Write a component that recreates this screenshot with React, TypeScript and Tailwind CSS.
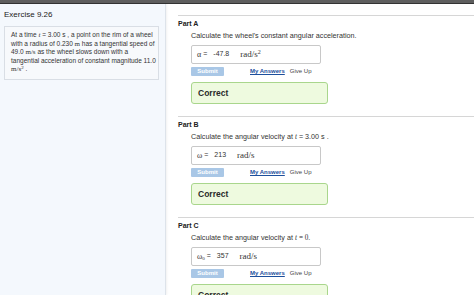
import React from "react";

const serif = "font-['Liberation_Serif',serif]";

const Part = ({
  label,
  prompt,
  symbol,
  value,
  unit,
}: {
  label: string;
  prompt: React.ReactNode;
  symbol: React.ReactNode;
  value: string;
  unit: React.ReactNode;
}) => (
  <div className="h-[101px] border-t border-[#d6d6d6] pt-[3px]">
    <div className="text-[7px] leading-[10px] font-bold text-[#222]">{label}</div>
    <div className="ml-[13px]">
      <div className="mt-[2px] text-[7.2px] leading-[10px] text-[#333]">{prompt}</div>
      <div className="mt-[4px] flex h-[19px] w-[130px] items-center rounded-[2px] border border-[#c8c8c8] bg-white pl-[5px] text-[7px] text-[#333]">
        <span className={`${serif} text-[8px]`}>{symbol}</span>
        <span className="ml-[2px]">=</span>
        <span className="ml-[6px]">{value}</span>
        <span className={`${serif} ml-[11px] text-[9px]`}>{unit}</span>
      </div>
      <div className="mt-[3px] flex h-[9px] items-center">
        <button className="h-[9px] w-[33px] rounded-[1px] bg-[#a9c7e6] text-[6px] font-bold leading-[9px] text-white">
          Submit
        </button>
        <span className="ml-[26px] text-[6px] font-bold text-[#1d4f9c] underline">My Answers</span>
        <span className="ml-[5px] text-[6px] text-[#444]">Give Up</span>
      </div>
      <div className="mt-[6px] flex h-[22px] w-[137px] items-center rounded-[3px] border border-[#a9d68c] bg-[#eefadf] pl-[6px] text-[8.5px] font-bold text-[#2a2a2a]">
        Correct
      </div>
    </div>
  </div>
);

export default function App() {
  return (
    <div className="h-[295px] w-[474px] overflow-hidden bg-white font-['Liberation_Sans',Arial,sans-serif]">
      <div className="h-[4px] border-b border-[#333] bg-[#5e5e5e]" />
      <div className="flex h-[291px]">
        <div className="w-[166px] shrink-0 border-r border-[#dde3ea] bg-[#f4f8fd] px-[4px] shadow-[1px_0_2px_rgba(0,0,0,0.06)]">
          <div className="pt-[6px] text-[8px] leading-[10px] text-[#222]">Exercise 9.26</div>
          <div className="mt-[6px] w-[155px] border border-[#d9dee5] bg-[#f7f9fc] pb-[5px] pl-[6px] pt-[4px] text-[6.5px] leading-[8.5px] text-[#333]">
            <div>
              At a time <span className={`${serif} italic text-[7px]`}>t</span> = 3.00 s , a point on the rim of a wheel
            </div>
            <div>
              with a radius of 0.230 <span className={`${serif} text-[7px]`}>m</span> has a tangential speed of
            </div>
            <div>
              49.0 <span className={`${serif} text-[7px]`}>m/s</span> as the wheel slows down with a
            </div>
            <div>tangential acceleration of constant magnitude 11.0</div>
            <div>
              <span className={`${serif} text-[7px]`}>
                m/s<sup className="text-[5px]">2</sup>
              </span>{" "}
              .
            </div>
          </div>
        </div>
        <div className="flex-1 pl-[12px] pt-[11px]">
          <Part
            label="Part A"
            prompt="Calculate the wheel's constant angular acceleration."
            symbol="α"
            value="-47.8"
            unit={
              <>
                rad/s<sup className="text-[6px]">2</sup>
              </>
            }
          />
          <Part
            label="Part B"
            prompt={
              <>
                Calculate the angular velocity at <span className={`${serif} italic`}>t</span> = 3.00 s .
              </>
            }
            symbol="ω"
            value="213"
            unit="rad/s"
          />
          <Part
            label="Part C"
            prompt={
              <>
                Calculate the angular velocity at <span className={`${serif} italic`}>t</span>{" "}
                <span className={serif}>= 0</span>.
              </>
            }
            symbol={
              <>
                ω<sub className="text-[5px]">0</sub>
              </>
            }
            value="357"
            unit="rad/s"
          />
        </div>
      </div>
    </div>
  );
}
